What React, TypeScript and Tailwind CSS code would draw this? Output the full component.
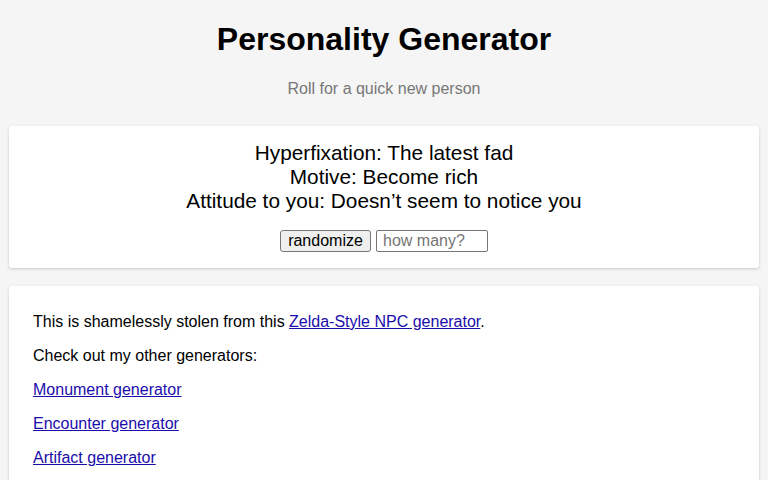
import { useState } from "react";

const lines = [
  "Hyperfixation: The latest fad",
  "Motive: Become rich",
  "Attitude to you: Doesn\u2019t seem to notice you",
];

const others = ["Monument generator", "Encounter generator", "Artifact generator"];

export default function App() {
  const [count, setCount] = useState("");

  return (
    <div className="min-h-screen bg-[#f5f5f5] pb-6 pt-[21px] font-['Liberation_Sans',Arial,sans-serif] text-black">
      <h1 className="text-center text-[32px] font-bold leading-[37px]">Personality Generator</h1>
      <p className="mt-[22px] text-center text-base leading-[18px] text-[#777]">Roll for a quick new person</p>

      <div className="mx-[9px] mt-[28px] rounded-[3px] bg-white pb-4 pt-[15px] text-center shadow-[0_1px_3px_rgba(0,0,0,0.18)]">
        {lines.map((l) => (
          <div key={l} className="text-[20.8px] leading-6">
            {l}
          </div>
        ))}
        <div className="mt-[17px] flex items-center justify-center gap-[5px]">
          <button className="h-[22px] w-[91px] rounded-[3px] border border-[#767676] bg-[#efefef] px-[6px] text-base leading-[18px] text-black">
            randomize
          </button>
          <input
            value={count}
            onChange={(e) => setCount(e.target.value)}
            placeholder="how many?"
            className="h-[22px] w-[112px] rounded-[2px] border border-[#767676] bg-white px-[6px] text-base leading-[18px] placeholder:text-[#757575]"
          />
        </div>
      </div>

      <div className="mx-[9px] mt-[18px] rounded-[3px] bg-white px-6 pb-6 pt-[27px] text-base leading-[18px] shadow-[0_1px_3px_rgba(0,0,0,0.18)]">
        <p>
          This is shamelessly stolen from this{" "}
          <a href="#" className="text-[#1a0dab] underline">
            Zelda-Style NPC generator
          </a>
          .
        </p>
        <p className="mt-4">Check out my other generators:</p>
        {others.map((o) => (
          <p key={o} className="mt-4">
            <a href="#" className="text-[#1a0dab] underline">
              {o}
            </a>
          </p>
        ))}
      </div>
    </div>
  );
}
